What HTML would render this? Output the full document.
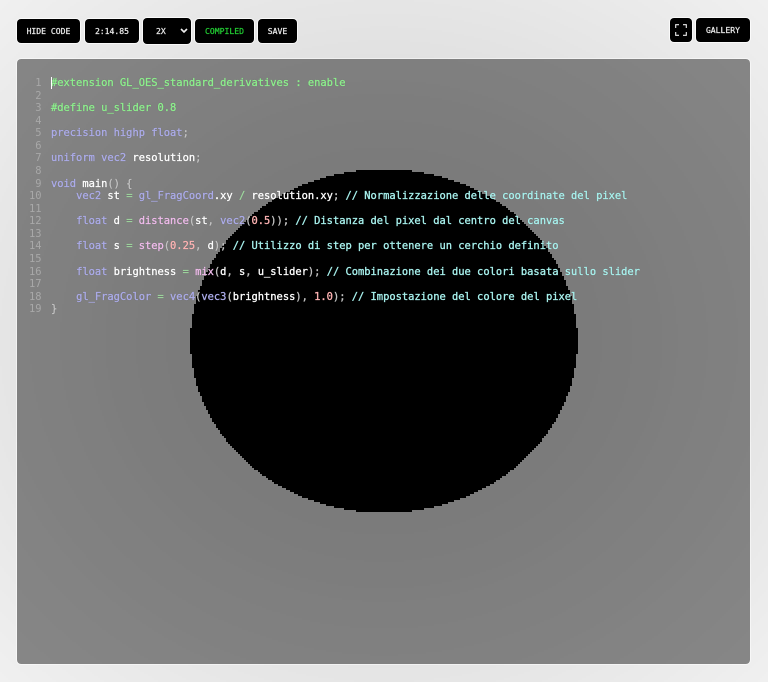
<!DOCTYPE html>
<html><head><meta charset="utf-8"><style>
html,body{margin:0;padding:0;width:768px;height:682px;overflow:hidden}
body{position:relative;font-family:"DejaVu Sans Mono",monospace;background:radial-gradient(ellipse 384px 341px at 384px 341px,#000 0,#000 25%,#d9d9d9 25%,#e6e6e6 100%,#f0f0f0 141%)}
#c{position:absolute;left:0;top:0;width:768px;height:682px;image-rendering:pixelated}
.b{position:absolute;background:#000;color:#e8e8e8;font:normal 8.1px/25px "DejaVu Sans Mono",monospace;-webkit-text-stroke:.25px currentColor;text-align:center;border-radius:4px;box-shadow:0 0 0 1px rgba(255,255,255,.75);white-space:pre}
#p{position:absolute;left:17px;top:59px;width:733px;height:605px;border-radius:4px;backdrop-filter:brightness(.565);-webkit-backdrop-filter:brightness(.565);box-shadow:0 0 0 1px rgba(255,255,255,.5)}
#n,#t{position:absolute;top:18.1px;font:normal 10.42px/12.56px "DejaVu Sans Mono",monospace;white-space:pre;margin:0;-webkit-text-stroke:.3px currentColor;text-shadow:0 0 1px rgba(0,0,0,.3);filter:blur(.25px)}
#n{left:0;width:24.5px;text-align:right;color:#a8a8a8;-webkit-text-stroke:0;text-shadow:none}
#t{left:34px;color:#ddd}
#cur{position:absolute;left:34px;top:18px;width:1px;height:12px;background:#fff}
.g{color:#8df08d}.k{color:#acacea}.v{color:#fff}.o{color:#9fd89f}.f{color:#f0bcec}.m{color:#ffb4b4}.c{color:#a8f2ee}.q{color:#c4c4c4}
</style></head><body>
<canvas id="c" width="384" height="341"></canvas>
<div class="b" style="left:17px;top:19px;width:63px;height:24px">HIDE CODE</div>
<div class="b" style="left:85px;top:19px;width:54px;height:24px">2:14.85</div>
<div class="b" style="left:143px;top:18px;width:48px;height:26px;line-height:27px;text-align:left;text-indent:13px">2X<svg style="position:absolute;left:37px;top:10px" width="8" height="6" viewBox="0 0 8 6"><path d="M1 1l3 3 3-3" fill="none" stroke="#eee" stroke-width="1.6"/></svg></div>
<div class="b" style="left:195px;top:19px;width:59px;height:24px;color:#22cc33">COMPILED</div>
<div class="b" style="left:258px;top:19px;width:39px;height:24px">SAVE</div>
<div class="b" style="left:670px;top:18px;width:22px;height:24px"><svg style="position:absolute;left:5px;top:6px" width="12" height="12" viewBox="0 0 12 12"><path d="M.7 4V.7H4M8 .7h3.3V4M11.3 8v3.3H8M4 11.3H.7V8" fill="none" stroke="#eee" stroke-width="1.1"/></svg></div>
<div class="b" style="left:696px;top:18px;width:54px;height:24px">GALLERY</div>
<div id="p">
<pre id="n">1
2
3
4
5
6
7
8
9
10
11
12
13
14
15
16
17
18
19</pre>
<pre id="t"><span class="g">#extension GL_OES_standard_derivatives : enable</span>

<span class="g">#define u_slider 0.8</span>

<span class="k">precision highp float</span><span class="q">;</span>

<span class="k">uniform vec2</span> <span class="v">resolution</span><span class="q">;</span>

<span class="k">void</span> <span class="v">main</span><span class="q">() {</span>
    <span class="k">vec2</span> <span class="v">st</span> <span class="o">=</span> <span class="k">gl_FragCoord</span><span class="v">.xy</span> <span class="o">/</span> <span class="v">resolution.xy</span><span class="q">;</span> <span class="c">// Normalizzazione delle coordinate del pixel</span>

    <span class="k">float</span> <span class="v">d</span> <span class="o">=</span> <span class="f">distance</span><span class="q">(</span><span class="v">st</span><span class="q">,</span> <span class="k">vec2</span><span class="q">(</span><span class="m">0.5</span><span class="q">));</span> <span class="c">// Distanza del pixel dal centro del canvas</span>

    <span class="k">float</span> <span class="v">s</span> <span class="o">=</span> <span class="f">step</span><span class="q">(</span><span class="m">0.25</span><span class="q">,</span> <span class="v">d</span><span class="q">);</span> <span class="c">// Utilizzo di step per ottenere un cerchio definito</span>

    <span class="k">float</span> <span class="v">brightness</span> <span class="o">=</span> <span class="f">mix</span><span class="q">(</span><span class="v">d</span><span class="q">,</span> <span class="v">s</span><span class="q">,</span> <span class="v">u_slider</span><span class="q">);</span> <span class="c">// Combinazione dei due colori basata sullo slider</span>

    <span class="k">gl_FragColor</span> <span class="o">=</span> <span class="k">vec4</span><span class="q">(</span><span class="k">vec3</span><span class="q">(</span><span class="v">brightness</span><span class="q">),</span> <span class="m">1.0</span><span class="q">);</span> <span class="c">// Impostazione del colore del pixel</span>
<span class="q">}</span></pre>
<div id="cur"></div>
</div>
<script>
var x=document.getElementById('c').getContext('2d'),W=384,H=341,im=x.createImageData(W,H);
for(var j=0;j<H;j++)for(var i=0;i<W;i++){var u=(i+.5)/W-.5,w=(j+.5)/H-.5,d=Math.sqrt(u*u+w*w),s=d<.252?0:1,b=d*.2+s*.8;
if(s==0)b=0;var a=(i+j*W)*4,l=Math.round(b*255);im.data[a]=im.data[a+1]=im.data[a+2]=l;im.data[a+3]=255}
x.putImageData(im,0,0);
</script>
</body></html>
